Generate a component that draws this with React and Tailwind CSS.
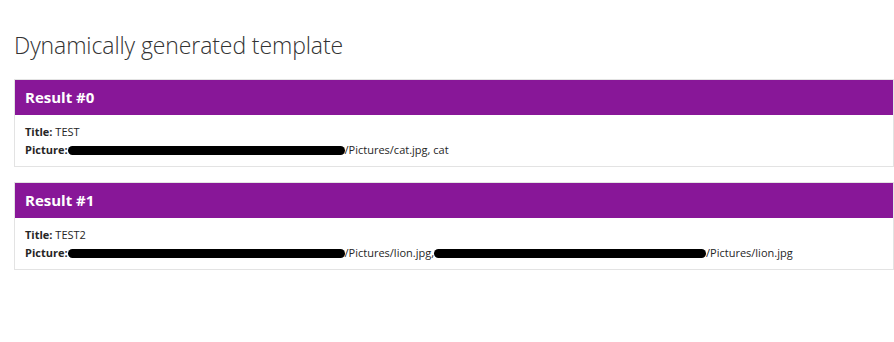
import React from 'react';

const results = [
  {
    title: 'TEST',
    parts: [
      { redact: 277 },
      { text: '/Pictures/cat.jpg, cat' },
    ],
  },
  {
    title: 'TEST2',
    parts: [
      { redact: 277 },
      { text: '/Pictures/lion.jpg,' },
      { redact: 272 },
      { text: '/Pictures/lion.jpg' },
    ],
  },
];

function Redacted({ width }) {
  return (
    <span
      className="inline-block h-[9px] rounded-full bg-black align-middle -mt-[2px]"
      style={{ width }}
    />
  );
}

export default function App() {
  return (
    <div className="min-h-[342px] bg-white pl-[14px] pt-[30px] font-['Open_Sans',sans-serif] text-[#262626]">
      <h1 className="text-[23px] font-light leading-[30px] tracking-[-0.1px] text-[#333]">
        Dynamically generated template
      </h1>
      <div className="mt-[19px] flex flex-col gap-[15px]">
        {results.map((r, i) => (
          <div key={i} className="border border-[#e3e3e3]">
            <div className="bg-[#881798] px-[10px] h-[35px] flex items-center text-[15px] font-bold text-white">
              Result #{i}
            </div>
            <div className="px-[10px] pt-[8px] pb-[7px] text-[11px] leading-[18px]">
              <div>
                <span className="font-bold">Title:</span> {r.title}
              </div>
              <div className="whitespace-nowrap">
                <span className="font-bold">Picture:</span>
                {r.parts.map((p, j) =>
                  p.redact ? <Redacted key={j} width={p.redact} /> : <span key={j}>{p.text}</span>
                )}
              </div>
            </div>
          </div>
        ))}
      </div>
    </div>
  );
}
